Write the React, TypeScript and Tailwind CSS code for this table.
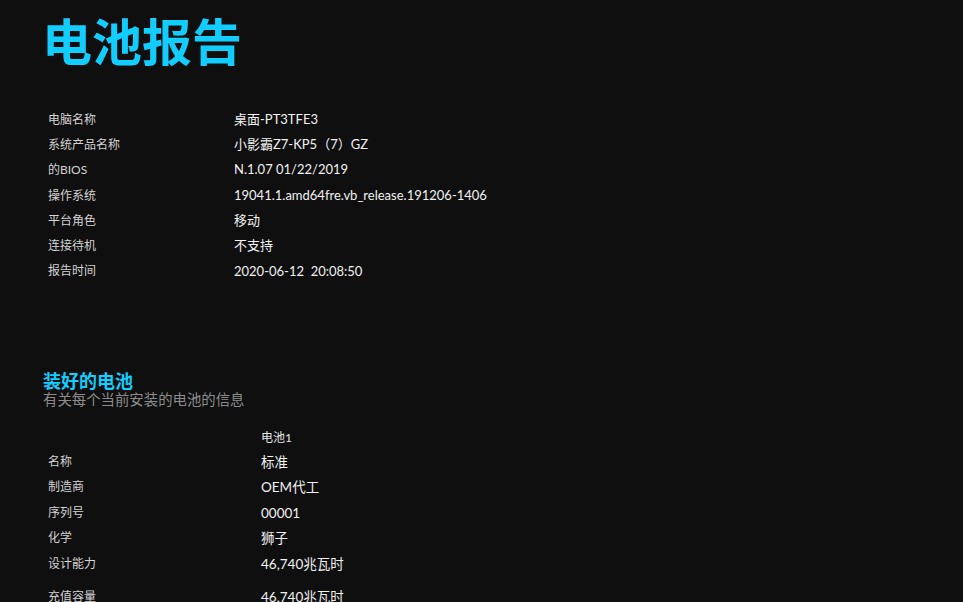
const systemInfo = [
  { label: "电脑名称", value: "桌面-PT3TFE3" },
  { label: "系统产品名称", value: "小影霸Z7-KP5（7）GZ" },
  { label: "的BIOS", value: "N.1.07 01/22/2019" },
  { label: "操作系统", value: "19041.1.amd64fre.vb_release.191206-1406" },
  { label: "平台角色", value: "移动" },
  { label: "连接待机", value: "不支持" },
  { label: "报告时间", value: "2020-06-12  20:08:50" },
];

const batteryInfo = [
  { label: "名称", value: "标准" },
  { label: "制造商", value: "OEM代工" },
  { label: "序列号", value: "00001" },
  { label: "化学", value: "狮子" },
  { label: "设计能力", value: "46,740兆瓦时" },
];

const font = "font-['Lato','Noto_Sans_CJK_SC',sans-serif]";

export default function App() {
  return (
    <div
      className={`h-[602px] w-[963px] overflow-hidden bg-[#0f0f0f] ${font} text-white`}
    >
      <h1 className="pl-[42px] pt-[3px] font-['Noto_Sans_CJK_SC',sans-serif] text-[50px] font-bold leading-[72px] text-[#12cdff]">
        电池报告
      </h1>

      <div className="mt-[32px] flex flex-col pl-[48px]">
        {systemInfo.map((row) => (
          <div key={row.label} className="flex h-[25.3px] items-center">
            <span className="w-[186px] text-[12px] text-[#d4d4d4]">
              {row.label}
            </span>
            <span className="whitespace-pre text-[13px] text-[#f2f2f2]">
              {row.value}
            </span>
          </div>
        ))}
      </div>

      <div className="mt-[85px] pl-[43px]">
        <h2 className="font-['Noto_Sans_CJK_SC',sans-serif] text-[18px] font-bold leading-[22px] text-[#12cdff]">
          装好的电池
        </h2>
        <p className="text-[14.4px] leading-[18px] text-[#8c8c8c]">
          有关每个当前安装的电池的信息
        </p>
      </div>

      <div className="mt-[18px] flex flex-col pl-[48px]">
        <div className="flex h-[22px] items-center">
          <span className="w-[213px]" />
          <span className="text-[12px] text-[#e6e6e6]">电池1</span>
        </div>
        {batteryInfo.map((row) => (
          <div key={row.label} className="flex h-[25.5px] items-center">
            <span className="w-[213px] text-[12px] text-[#d4d4d4]">
              {row.label}
            </span>
            <span className="text-[13.5px] text-[#f2f2f2]">{row.value}</span>
          </div>
        ))}
        <div className="mt-[8px] flex h-[25.5px] items-center">
          <span className="w-[213px] text-[12px] text-[#d4d4d4]">充值容量</span>
          <span className="text-[13.5px] text-[#f2f2f2]">46,740兆瓦时</span>
        </div>
      </div>
    </div>
  );
}
